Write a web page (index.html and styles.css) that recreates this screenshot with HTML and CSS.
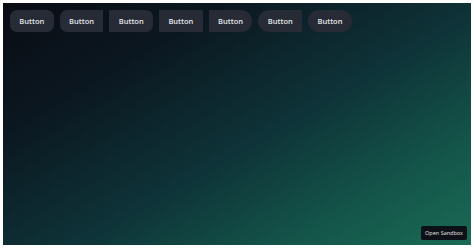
FILE: index.html
```html
<!DOCTYPE html>
<html>

<head>
	<meta charset="utf-8">
	<meta name="viewport" content="width=device-width, initial-scale=1">
	<title>Button Radius</title>
	<link rel="stylesheet" href="styles.css">
</head>

<body>
	<div class="stage">
		<div class="row">
			<button class="btn r-md">Button</button>
			<button class="btn r-l-md">Button</button>
			<button class="btn r-r-md">Button</button>
			<button class="btn">Button</button>
			<button class="btn r-r-full">Button</button>
			<button class="btn r-l-full">Button</button>
			<button class="btn r-full">Button</button>
		</div>

		<a class="sandbox" href="#">Open Sandbox</a>
	</div>
</body>

</html>
```

FILE: styles.css
```css
html, body {
	margin: 0;
	background-color: white;
}

body {
	padding: 3px;
}

.stage {
	position: relative;
	height: 242px;
	background: linear-gradient(150deg, #0a0c14 0%, #0b1720 25%, #0e3338 55%, #14564a 80%, #1a6a55 100%);
	font-family: "Open Sans", Inter, sans-serif;
}

.row {
	display: flex;
	gap: 6px;
	padding: 7px 0 0 7px;
}

.btn {
	width: 43.7px;
	height: 22px;
	border: none;
	padding: 0;
	background-color: #262b35;
	color: #e4e6ea;
	font-family: "Open Sans", Inter, sans-serif;
	font-weight: 600;
	font-size: 7.5px;
	cursor: pointer;
}

.r-md {
	border-radius: 7px;
}

.r-l-md {
	border-radius: 7px 0 0 7px;
}

.r-r-md {
	border-radius: 0 7px 7px 0;
}

.r-r-full {
	border-radius: 0 11px 11px 0;
}

.r-l-full {
	border-radius: 11px 0 0 11px;
}

.r-full {
	border-radius: 11px;
}

.sandbox {
	position: absolute;
	right: 4px;
	bottom: 5px;
	padding: 3px 4px;
	background-color: #0d1117;
	color: #e6e6e6;
	font-size: 5.5px;
	font-weight: 500;
	text-decoration: none;
	border-radius: 2px;
}
```
